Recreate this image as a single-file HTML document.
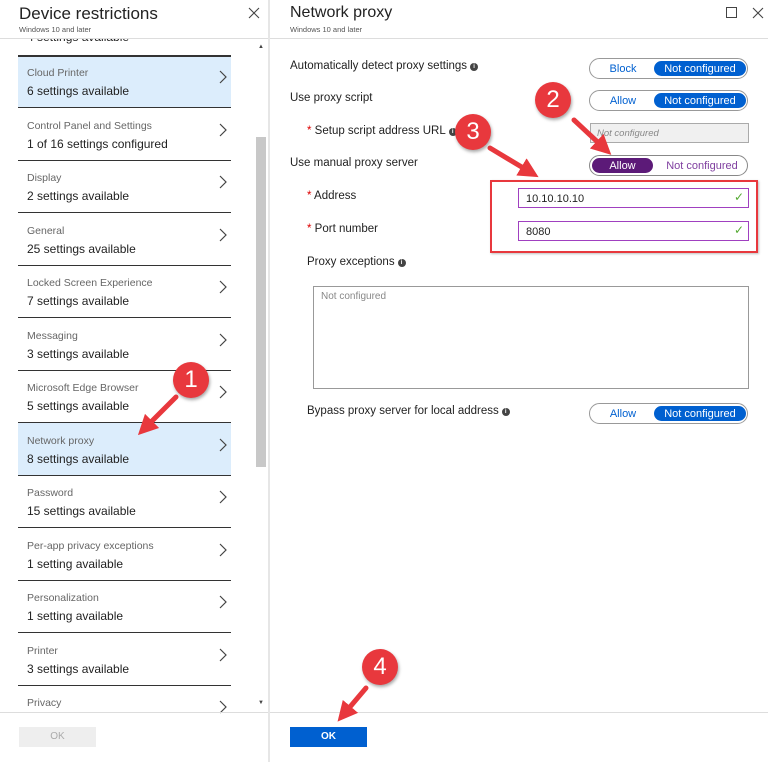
<!DOCTYPE html>
<html><head><meta charset="utf-8"><style>
*{margin:0;padding:0;box-sizing:border-box}
body{width:768px;height:762px;position:relative;overflow:hidden;background:#fff;font-family:"Liberation Sans",sans-serif;color:#222}
.a{position:absolute}
.item{position:absolute;left:18px;width:213px;height:52px;border-bottom:1.5px solid #333}
.item .t{position:absolute;left:9px;top:11px;font-size:10.5px;color:#666}
.item .s{position:absolute;left:9px;top:28px;font-size:12px;color:#222}
.item .c{position:absolute;right:4px;top:14px}
.lbl{position:absolute;font-size:11.5px;color:#222}
.star{color:#d00}
.info{display:inline-block;width:8px;height:8px;border-radius:50%;background:#444;color:#fff;font-size:6px;line-height:8px;text-align:center;font-weight:bold;vertical-align:1px;margin-left:3px}
.tog{position:absolute;left:589px;width:159px;height:21px;border:1px solid #999;border-radius:11px;font-size:11px}
.tog .l{position:absolute;left:0;width:66px;top:4px;text-align:center;color:#0060d0}
.tog .r{position:absolute;left:64px;top:2px;width:92px;height:15px;border-radius:8px;background:#0060d0;color:#fff;text-align:center;line-height:16px}
.inp{position:absolute;left:518px;width:231px;height:20px;border:1px solid #a040c0;font-size:11px;padding:4px 7px}
.chk{position:absolute;right:4px;top:1px;color:#5a3;font-size:12px}
.circ{position:absolute;width:36px;height:36px;border-radius:50%;background:#e8383d;color:#fff;font-size:24px;text-align:center;line-height:36px;box-shadow:1px 2px 3px rgba(0,0,0,.35)}
</style></head><body>
<!-- left panel -->
<div class="a" style="left:27px;top:30px;font-size:12px;color:#222">4 settings available</div>
<div class="a" style="left:0;top:0;width:268px;height:38px;background:#fff"></div>
<div class="a" style="left:19px;top:4px;font-size:17px;color:#222">Device restrictions</div>
<div class="a" style="left:19px;top:25px;font-size:7.5px;color:#555">Windows 10 and later</div>
<svg class="a" style="left:248px;top:7px" width="12" height="12"><path d="M1,1 L11,11 M11,1 L1,11" stroke="#444" stroke-width="1.1"/></svg>
<div class="a" style="left:0;top:38px;width:268px;height:1px;background:#ddd"></div>
<div class="a" style="left:268px;top:0;width:2px;height:762px;background:#e6e6e6"></div>
<div class="a" style="left:18px;top:55px;width:213px;height:1.5px;background:#333"></div>
<div class="a" style="left:18px;top:57px;width:213px;height:51px;background:#dcedfc"></div>
<div class="a" style="left:18px;top:423px;width:213px;height:52px;background:#dcedfc"></div>
<div id="items"></div>
<div class="a" style="left:255px;top:40px;width:11px;height:672px;background:#fff"></div>
<div class="a" style="left:256px;top:137px;width:10px;height:330px;background:#c8c8c8"></div>
<div class="a" style="left:258px;top:44px;font-size:6px;color:#444">▲</div>
<div class="a" style="left:258px;top:700px;font-size:6px;color:#444">▼</div>
<div class="a" style="left:0;top:712px;width:268px;height:1px;background:#ddd"></div>
<div class="a" style="left:19px;top:727px;width:77px;height:20px;background:#eee;color:#aaa;font-size:10px;text-align:center;line-height:20px">OK</div>
<!-- right panel -->
<div class="a" style="left:290px;top:4px;font-size:16px;color:#222">Network proxy</div>
<div class="a" style="left:290px;top:25px;font-size:7.5px;color:#555">Windows 10 and later</div>
<div class="a" style="left:726px;top:7px;width:11px;height:11px;border:1.3px solid #444"></div>
<svg class="a" style="left:752px;top:7px" width="12" height="12"><path d="M1,1 L11,11 M11,1 L1,11" stroke="#444" stroke-width="1.1"/></svg>
<div class="a" style="left:270px;top:38px;width:498px;height:1px;background:#ddd"></div>

<div class="lbl" style="left:290px;top:60px">Automatically detect proxy settings<span class="info">i</span></div>
<div class="tog" style="top:58px"><span class="l">Block</span><span class="r">Not configured</span></div>
<div class="lbl" style="left:290px;top:92px">Use proxy script</div>
<div class="tog" style="top:90px"><span class="l">Allow</span><span class="r">Not configured</span></div>
<div class="lbl" style="left:307px;top:125px"><span class="star">*</span> Setup script address URL<span class="info">i</span></div>
<div class="a" style="left:590px;top:123px;width:159px;height:20px;border:1px solid #aaa;background:#f0f0f0;font-size:9.5px;font-style:italic;color:#888;padding:4px 6px">Not configured</div>
<div class="lbl" style="left:290px;top:157px">Use manual proxy server</div>
<div class="tog" style="top:155px;border-color:#888"><span class="r" style="left:2px;width:61px;background:#5c1a78">Allow</span><span class="l" style="left:66px;width:92px;color:#8040a0">Not configured</span></div>
<div class="lbl" style="left:307px;top:190px"><span class="star">*</span> Address</div>
<div class="inp" style="top:188px">10.10.10.10<span class="chk">✓</span></div>
<div class="lbl" style="left:307px;top:223px"><span class="star">*</span> Port number</div>
<div class="inp" style="top:221px">8080<span class="chk">✓</span></div>
<div class="a" style="left:490px;top:180px;width:268px;height:73px;border:2px solid #e8383d;box-shadow:1px 1px 2px rgba(0,0,0,.25)"></div>
<div class="lbl" style="left:307px;top:256px">Proxy exceptions<span class="info">i</span></div>
<div class="a" style="left:313px;top:286px;width:436px;height:103px;border:1px solid #999;font-size:10px;color:#888;padding:4px 7px">Not configured</div>
<div class="lbl" style="left:307px;top:405px">Bypass proxy server for local address<span class="info">i</span></div>
<div class="tog" style="top:403px"><span class="l">Allow</span><span class="r">Not configured</span></div>

<div class="a" style="left:270px;top:712px;width:498px;height:1px;background:#ddd"></div>
<div class="a" style="left:290px;top:727px;width:77px;height:20px;background:#0060d0;color:#fff;font-size:10px;font-weight:bold;text-align:center;line-height:20px">OK</div>

<svg class="a" style="left:0;top:0" width="768" height="762">
<defs><marker id="h" markerWidth="4" markerHeight="4" refX="2" refY="2" orient="auto"><path d="M0,0 L4,2 L0,4 z" fill="#e8383d"/></marker></defs>
<g stroke="#e8383d" stroke-width="5" stroke-linecap="round" marker-end="url(#h)">
<line x1="176" y1="397" x2="145" y2="428"/>
<line x1="574" y1="120" x2="604" y2="148"/>
<line x1="490" y1="148" x2="530" y2="172"/>
<line x1="366" y1="688" x2="344" y2="714"/>
</g></svg>
<div class="circ" style="left:173px;top:362px">1</div>
<div class="circ" style="left:535px;top:82px">2</div>
<div class="circ" style="left:455px;top:114px">3</div>
<div class="circ" style="left:362px;top:649px">4</div>
<script>
var d=[["Cloud Printer","6 settings available"],["Control Panel and Settings","1 of 16 settings configured"],["Display","2 settings available"],["General","25 settings available"],["Locked Screen Experience","7 settings available"],["Messaging","3 settings available"],["Microsoft Edge Browser","5 settings available"],["Network proxy","8 settings available"],["Password","15 settings available"],["Per-app privacy exceptions","1 setting available"],["Personalization","1 setting available"],["Printer","3 settings available"],["Privacy",""]];
var h="";d.forEach(function(x,i){var top=56+i*52.5;h+='<div class="item" style="top:'+top+'px;'+(i==12?'border:none;height:40px;overflow:hidden':'')+'"><div class="t">'+x[0]+'</div><div class="s">'+x[1]+'</div><svg class="c" width="8" height="14"><path d="M1,1 L7,7 L1,13" stroke="#444" stroke-width="1.2" fill="none"/></svg></div>'});
document.getElementById("items").innerHTML=h;
</script>
</body></html>
